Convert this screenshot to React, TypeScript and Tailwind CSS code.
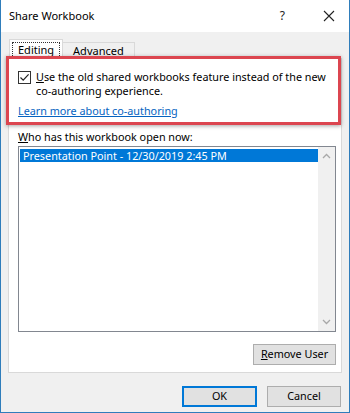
import React from 'react';

const FONT = { fontFamily: "'Noto Sans', 'Open Sans', sans-serif" };

export default function App() {
  return (
    <div
      className="relative w-[350px] h-[413px] bg-[#f0f0f0] border-x border-b border-[#2f7dbb] flex flex-col text-[10.8px] text-[#000] overflow-hidden"
      style={FONT}
    >
      {/* title bar */}
      <div className="h-[32px] bg-white flex items-center pl-[8px] pr-[14px] shrink-0">
        <span className="text-[11px]">Share Workbook</span>
        <span className="ml-auto text-[12px] text-[#222] mr-[38px]">?</span>
        <svg width="12" height="12" viewBox="0 0 12 12" className="text-[#222]">
          <path d="M1 1L11 11M11 1L1 11" stroke="currentColor" strokeWidth="1.1" />
        </svg>
      </div>

      {/* tabs */}
      <div className="flex items-end pl-[8px] mt-[7px] h-[20px] shrink-0 relative z-10">
        <div className="h-[20px] px-[2px] pt-[2px] bg-white border border-b-0 border-[#d9d9d9]">
          <div className="px-[5px] leading-[14px] border border-dotted border-[#333] text-[11px]">Editing</div>
        </div>
        <div className="h-[17px] px-[10px] bg-[#f0f0f0] border border-l-0 border-b-0 border-[#d9d9d9] leading-[16px] text-[11px]">
          Advanced
        </div>
      </div>

      {/* panel */}
      <div className="mx-[7px] -mt-px h-[315px] bg-white border border-[#d9d9d9] flex flex-col pl-[9px] pr-[6px] shrink-0">
        <div className="flex items-start mt-[11px]">
          <div className="w-[13px] h-[13px] border border-[#333] bg-white flex items-center justify-center shrink-0 mt-[1px]">
            <svg width="11" height="11" viewBox="0 0 11 11">
              <path d="M1.5 5.5L4.2 8.2L9.6 2.4" stroke="#222" strokeWidth="1.2" fill="none" />
            </svg>
          </div>
          <div className="ml-[5px] leading-[14px] whitespace-nowrap">
            <span className="underline">U</span>se the old shared workbooks feature instead of the new
            <br />
            co-authoring experience.
          </div>
        </div>
        <div className="mt-[6px] leading-[14px] text-[#0563c1] underline">Learn more about co-authoring</div>

        <div className="mt-[12px] leading-[14px]">
          <span className="underline">W</span>ho has this workbook open now:
        </div>

        <div className="mt-[2px] w-[318px] h-[186px] border border-[#828790] flex">
          <div className="flex-1 pt-[2px] pl-[1px]">
            <div className="h-[13px] bg-[#0078d7] text-white leading-[13px] pl-[3px]">
              Presentation Point - 12/30/2019 2:45 PM
            </div>
          </div>
          <div className="w-[17px] bg-[#f0f0f0] flex flex-col items-center justify-between py-[6px]">
            <svg width="9" height="6" viewBox="0 0 9 6">
              <path d="M1 5L4.5 1.5L8 5" stroke="#a8a8a8" strokeWidth="1.3" fill="none" />
            </svg>
            <svg width="9" height="6" viewBox="0 0 9 6">
              <path d="M1 1L4.5 4.5L8 1" stroke="#a8a8a8" strokeWidth="1.3" fill="none" />
            </svg>
          </div>
        </div>

        <div className="flex justify-end mt-[12px] w-[318px]">
          <div className="w-[83px] h-[21px] bg-[#e1e1e1] border border-[#adadad] flex items-center justify-center">
            <span className="underline">R</span>emove User
          </div>
        </div>
      </div>

      {/* bottom buttons */}
      <div className="flex justify-end gap-[10px] pr-[8px] mt-[13px]">
        <div className="w-[75px] h-[21px] bg-[#e1e1e1] border-2 border-[#0078d7] flex items-center justify-center">
          OK
        </div>
        <div className="w-[74px] h-[21px] bg-[#e1e1e1] border border-[#adadad] flex items-center justify-center">
          Cancel
        </div>
      </div>

      {/* red annotation box */}
      <div className="absolute left-[5px] top-[56px] w-[335px] h-[69px] border-[3px] border-[#dc4650] shadow-[0_1px_4px_rgba(0,0,0,0.35)] pointer-events-none z-20" />
    </div>
  );
}
